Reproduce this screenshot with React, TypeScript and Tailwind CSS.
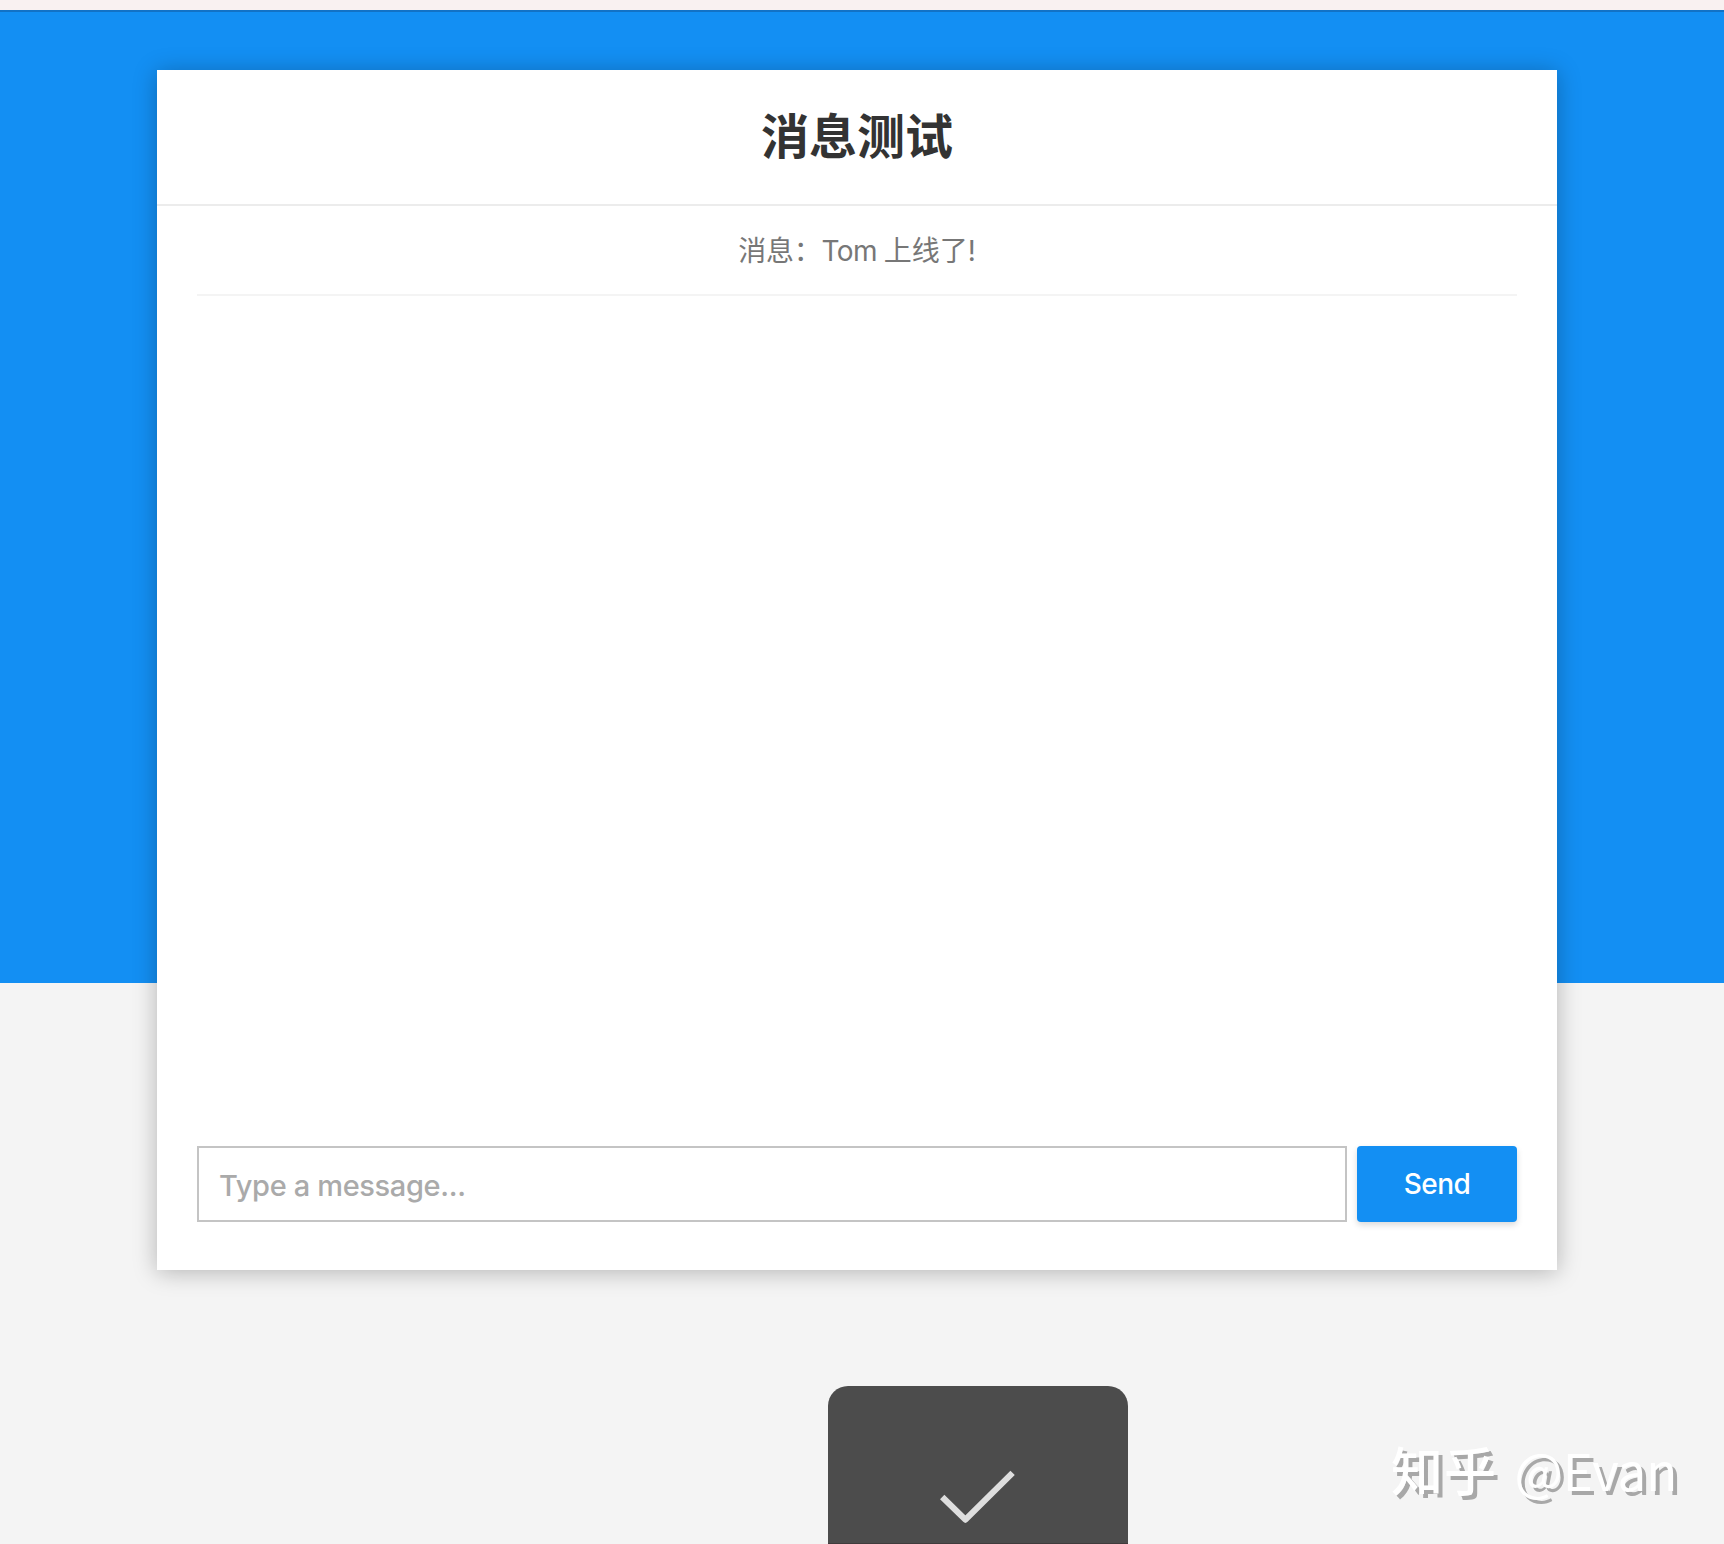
import { useState } from "react";

const messages = [{ id: 1, label: "消息：", user: "Tom", text: "上线了!" }];

function CheckToast() {
  return (
    <div className="flex h-[158px] w-[300px] justify-center rounded-t-[20px] border-b border-[#403b3c] bg-[#4c4c4c] pt-[84px]">
      <svg width="76" height="56" viewBox="0 0 76 56" fill="none">
        <path
          d="M2.2 27 L25.4 49.6 L72.6 2.9"
          stroke="#dedede"
          strokeWidth="6.2"
          strokeLinejoin="round"
        />
      </svg>
    </div>
  );
}

export default function App() {
  const [draft, setDraft] = useState("");

  return (
    <div className="h-[1544px] w-full overflow-hidden bg-[#f4f4f4] font-['Inter','Noto_Sans_CJK_SC',sans-serif]">
      {/* Top strip */}
      <div className="h-[10px] bg-[#f9f1f1]" />

      {/* Blue backdrop */}
      <div className="h-[973px] border-t-2 border-[#1272c6] bg-[#138ff3]" />

      {/* Chat card */}
      <main className="mx-auto -mt-[913px] flex h-[1200px] w-[1400px] -translate-x-[5px] flex-col bg-white shadow-[0_2px_22px_rgba(0,0,0,0.27)]">
        <header className="flex h-[136px] items-center justify-center border-b-2 border-[#ececec]">
          <h2 className="text-[48px] leading-none font-bold text-[#333]">
            消息测试
          </h2>
        </header>

        <ul className="flex-1 px-10">
          {messages.map((m) => (
            <li
              key={m.id}
              className="flex h-[90px] items-center justify-center border-b-2 border-[#f4f4f4] pt-px text-[28px] text-[#777]"
            >
              <span className="tracking-[-0.2px]">{m.label}</span>
              <span className="mr-[7px] tracking-[-0.7px]">{m.user}</span>
              <span>{m.text}</span>
            </li>
          ))}
        </ul>

        <form
          className="flex gap-[10px] px-10 pb-12"
          onSubmit={(e) => e.preventDefault()}
        >
          <input
            value={draft}
            onChange={(e) => setDraft(e.target.value)}
            placeholder="Type a message..."
            className="h-[76px] w-[1150px] border-2 border-[#c4c4c4] px-5 pt-[3px] text-[29px] font-[450] tracking-[-0.35px] text-[#333] outline-none placeholder:text-[#aaa]"
          />
          <button className="h-[76px] flex-1 rounded-[4px] bg-[#138ff3] text-[28px] font-[450] tracking-[-0.6px] text-white shadow-[0_3px_6px_rgba(0,0,0,0.15)]">
            Send
          </button>
        </form>
      </main>

      {/* Toast and signature */}
      <footer className="mt-[116px] flex pl-[828px]">
        <CheckToast />
        <p className="mt-[53px] ml-[263px] font-['Noto_Sans_CJK_SC',sans-serif] text-[52px] leading-[60px] whitespace-nowrap text-white [text-shadow:4px_4px_0_#a8a8a8]">
          <span className="mr-[6px] font-medium tracking-[1px]">知乎</span>
          <span className="text-[51px]">{" @Evan"}</span>
        </p>
      </footer>
    </div>
  );
}
